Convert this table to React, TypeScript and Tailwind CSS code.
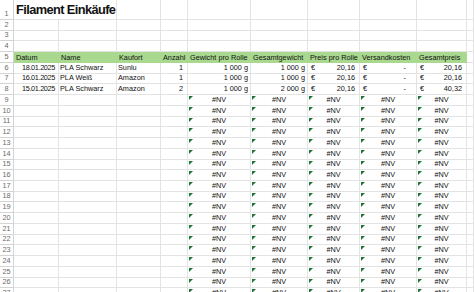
import React from "react";

const W = [45, 58, 44, 27, 63, 57, 52, 57, 50, 7];
const WCLS = [
  "w-[45px]",
  "w-[58px]",
  "w-[44px]",
  "w-[27px]",
  "w-[63px]",
  "w-[57px]",
  "w-[52px]",
  "w-[57px]",
  "w-[50px]",
  "w-[7px]",
];

function RowHead({ n }: { n: number }) {
  return (
    <div className="w-[14px] shrink-0 flex items-end justify-center border-r border-b border-[#d4d4d4] text-[#6b6b6b] text-[7.3px] leading-[8px] pb-[1px]">
      {n}
    </div>
  );
}

function Cell({
  i,
  children,
  className = "",
  green,
}: {
  i: number;
  children?: React.ReactNode;
  className?: string;
  green?: boolean;
}) {
  return (
    <div
      className={`${WCLS[i]} shrink-0 relative flex items-end overflow-visible whitespace-nowrap pb-[1px] ${
        green ? "bg-[#a9d88f]" : "border-r border-b border-[#e3e3e3]"
      } ${className}`}
    >
      {children}
    </div>
  );
}

function Tri() {
  return (
    <div className="absolute top-[1px] left-[1px] w-0 h-0 border-t-[4px] border-t-[#1d7434] border-r-[4px] border-r-transparent" />
  );
}

function Euro({ v }: { v: string }) {
  return (
    <div className="flex w-full justify-between pl-[3px] pr-[4px]">
      <span>€</span>
      <span>{v}</span>
    </div>
  );
}

function EuroDash() {
  return (
    <div className="flex w-full justify-between pl-[3px] pr-[10px]">
      <span>€</span>
      <span>-</span>
    </div>
  );
}

const rowH = "h-[10.74px]";

function EmptyRow({ n }: { n: number }) {
  return (
    <div className={`flex ${rowH}`}>
      <RowHead n={n} />
      {W.map((_, i) => (
        <Cell key={i} i={i} />
      ))}
    </div>
  );
}

function NvRow({ n }: { n: number }) {
  return (
    <div className={`flex ${rowH}`}>
      <RowHead n={n} />
      {W.map((_, i) => {
        const nv = i >= 4 && i <= 8;
        return (
          <Cell key={i} i={i} className={nv ? "justify-center" : ""}>
            {nv && (
              <>
                <Tri />
                <span>#NV</span>
              </>
            )}
          </Cell>
        );
      })}
    </div>
  );
}

const data = [
  ["18.01.2025", "PLA Schwarz", "Sunlu", "1", "1 000 g", "1 000 g", "20,16", "20,16"],
  ["16.01.2025", "PLA Weiß", "Amazon", "1", "1 000 g", "1 000 g", "20,16", "20,16"],
  ["15.01.2025", "PLA Schwarz", "Amazon", "2", "1 000 g", "2 000 g", "20,16", "40,32"],
];

export default function App() {
  const headers = [
    "Datum",
    "Name",
    "Kaufort",
    "Anzahl",
    "Gewicht pro Rolle",
    "Gesamtgewicht",
    "Preis pro Rolle",
    "Versandkosten",
    "Gesamtpreis",
  ];
  return (
    <div
      className="w-[474px] h-[292px] overflow-hidden bg-white text-[#111] text-[7.3px] leading-[8px]"
      style={{ fontFamily: '"Liberation Sans", Arial, sans-serif' }}
    >
      {/* Row 1 */}
      <div className="flex h-[20px]">
        <RowHead n={1} />
        <div className="w-[103px] shrink-0 relative border-r border-b border-[#e3e3e3] flex items-end pb-[2px] pl-[2px] overflow-visible whitespace-nowrap">
          <span className="text-[12.8px] leading-[14px] font-bold tracking-[-0.6px]">
            Filament Einkäufe
          </span>
        </div>
        {W.slice(2).map((_, k) => (
          <Cell key={k} i={k + 2} />
        ))}
      </div>
      <EmptyRow n={2} />
      <EmptyRow n={3} />
      <EmptyRow n={4} />
      {/* Row 5 header */}
      <div className={`flex ${rowH}`}>
        <RowHead n={5} />
        {headers.map((h, i) => (
          <Cell key={i} i={i} green className="pl-[2px]">
            <span>{h}</span>
          </Cell>
        ))}
        <Cell i={9} />
      </div>
      {data.map((r, k) => (
        <div key={k} className={`flex ${rowH}`}>
          <RowHead n={6 + k} />
          <Cell i={0} className="justify-end pr-[3px]">
            <span className="tracking-[-0.35px]">{r[0]}</span>
          </Cell>
          <Cell i={1} className="pl-[1px]">
            <span>{r[1]}</span>
          </Cell>
          <Cell i={2} className="pl-[1px]">
            <span>{r[2]}</span>
          </Cell>
          <Cell i={3} className="justify-end pr-[4px]">
            <span>{r[3]}</span>
          </Cell>
          <Cell i={4} className="justify-end pr-[2px]">
            <span>{r[4]}</span>
          </Cell>
          <Cell i={5} className="justify-end pr-[2px]">
            <span>{r[5]}</span>
          </Cell>
          <Cell i={6}>
            <Euro v={r[6]} />
          </Cell>
          <Cell i={7}>
            <EuroDash />
          </Cell>
          <Cell i={8}>
            <Euro v={r[7]} />
          </Cell>
          <Cell i={9} />
        </div>
      ))}
      {Array.from({ length: 19 }, (_, k) => (
        <NvRow key={k} n={9 + k} />
      ))}
    </div>
  );
}
